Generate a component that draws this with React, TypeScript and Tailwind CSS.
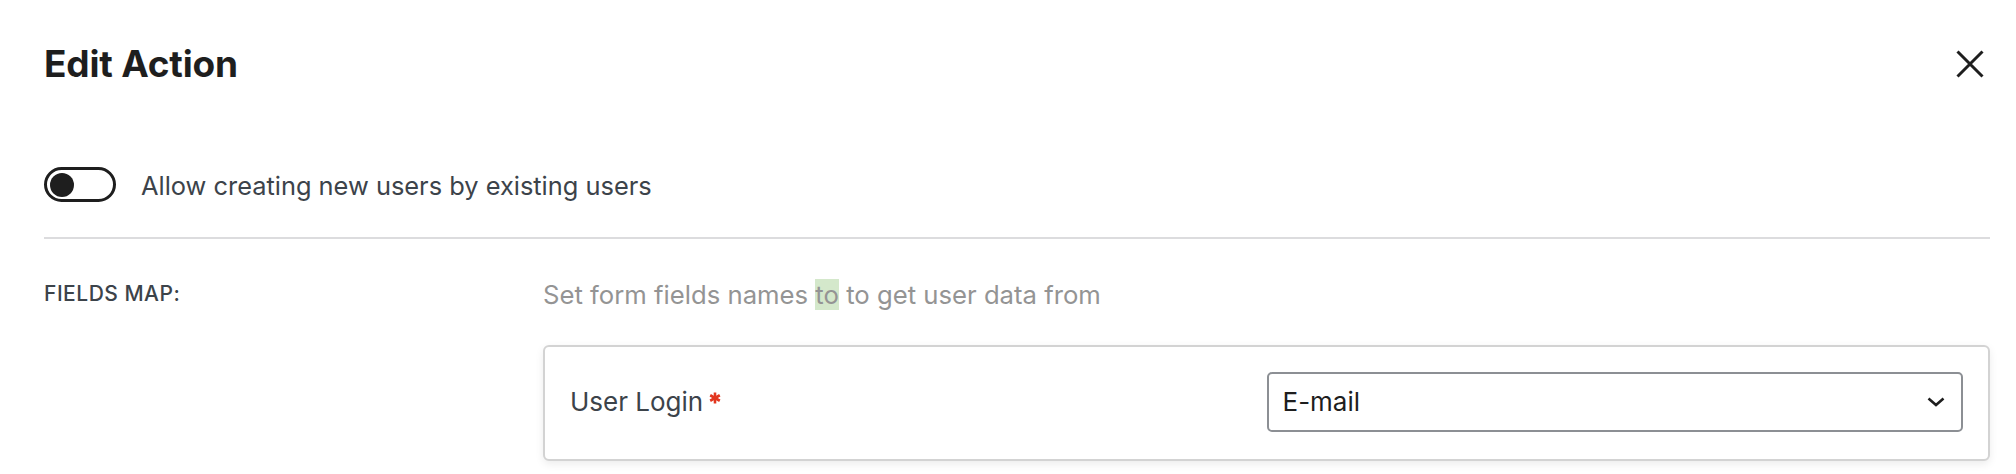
import React from 'react'

// Edit Action modal — "register user" action settings, fields map section.

function Toggle() {
  return (
    <div className="flex h-[35px] w-[72px] items-center rounded-full border-[3px] border-[#1e1e1e] bg-white">
      <div className="ml-[3px] h-[24px] w-[24px] rounded-full bg-[#1e1e1e]" />
    </div>
  )
}

function RequiredMark() {
  return (
    <svg width="12" height="12" viewBox="0 0 12 12" className="ml-[6px] -mt-[8px]">
      <g stroke="#e2361f" strokeWidth="2.6" strokeLinecap="butt">
        <line x1="6" y1="0.5" x2="6" y2="11.5" />
        <line x1="1.2" y1="3.25" x2="10.8" y2="8.75" />
        <line x1="1.2" y1="8.75" x2="10.8" y2="3.25" />
      </g>
    </svg>
  )
}

export default function App() {
  return (
    <div className="min-h-[474px] w-[2016px] bg-white pl-[44px] pr-[26px] font-['Inter',sans-serif] antialiased">
      {/* header */}
      <div className="flex h-[128px] items-center justify-between">
        <h1 className="text-[37px] font-bold leading-[1.2] tracking-[-0.2px] text-[#1e1e1e]">Edit Action</h1>
        <button className="mr-[6px] flex h-[28px] w-[28px] items-center justify-center">
          <svg width="28" height="28" viewBox="0 0 28 28" fill="none">
            <path d="M1.5 1.5 L26.5 26.5 M26.5 1.5 L1.5 26.5" stroke="#1e1e1e" strokeWidth="3" />
          </svg>
        </button>
      </div>

      {/* allow toggle */}
      <div className="mt-[39px] flex h-[35px] items-center gap-[25px]">
        <Toggle />
        <span className="pt-[3px] text-[25.4px] leading-[36px] text-[#3c434a]">Allow creating new users by existing users</span>
      </div>

      <div className="mt-[35px] h-[2px] bg-[#dcdcde]" />

      {/* fields map */}
      <div className="flex items-start pt-[38px]">
        <div className="w-[499px] shrink-0 pt-[2px] text-[21px] font-medium uppercase leading-[30px] tracking-[0.5px] text-[#3c434a]">
          Fields map:
        </div>
        <div className="flex-1">
          <p className="text-[25.7px] leading-[36px] text-[#949494]">
            Set form fields names <span className="bg-[#d4e8cb]">to</span> to get user data from
          </p>
          <div className="mt-[32px] rounded-[6px] border-2 border-[#d3d3d3] bg-white px-[25px] pt-[25px] pb-[27px] shadow-[0_3px_8px_rgba(0,0,0,0.08)]">
            <div className="grid grid-cols-2 items-center">
              <div className="flex items-center text-[26px] leading-[36px] text-[#3c434a]">
                User Login
                <RequiredMark />
              </div>
              <div className="flex h-[60px] items-center justify-between rounded-[5px] border-2 border-[#8c8f94] bg-white pl-[14px] pr-[16px]">
                <span className="text-[26px] leading-[36px] text-[#1e1e1e]">E-mail</span>
                <svg width="18" height="10" viewBox="0 0 18 10" fill="none">
                  <path d="M1.5 1.5 L9 8 L16.5 1.5" stroke="#1e1e1e" strokeWidth="2.6" />
                </svg>
              </div>
            </div>
          </div>
        </div>
      </div>
    </div>
  )
}
